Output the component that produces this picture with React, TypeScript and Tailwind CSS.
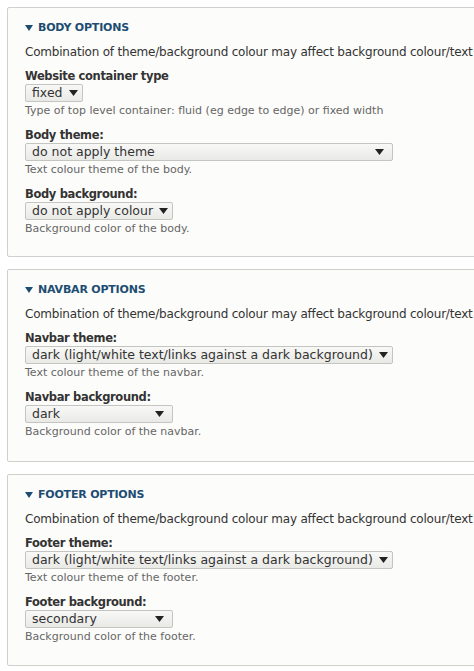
const FONT = "font-['DejaVu_Sans',_'Liberation_Sans',_sans-serif]";

type Item = {
  label: string;
  value: string;
  width: string;
  help: string;
};

type Group = {
  title: string;
  intro: string;
  items: Item[];
  extra: string;
};

const groups: Group[] = [
  {
    title: "Body options",
    intro: "Combination of theme/background colour may affect background colour/text",
    extra: "pb-[19px]",
    items: [
      {
        label: "Website container type",
        value: "fixed",
        width: "w-[58px]",
        help: "Type of top level container: fluid (eg edge to edge) or fixed width",
      },
      {
        label: "Body theme:",
        value: "do not apply theme",
        width: "w-[368px]",
        help: "Text colour theme of the body.",
      },
      {
        label: "Body background:",
        value: "do not apply colour",
        width: "w-[148px]",
        help: "Background color of the body.",
      },
    ],
  },
  {
    title: "Navbar options",
    intro: "Combination of theme/background colour may affect background colour/text",
    extra: "pb-[21px]",
    items: [
      {
        label: "Navbar theme:",
        value: "dark (light/white text/links against a dark background)",
        width: "w-[368px]",
        help: "Text colour theme of the navbar.",
      },
      {
        label: "Navbar background:",
        value: "dark",
        width: "w-[148px]",
        help: "Background color of the navbar.",
      },
    ],
  },
  {
    title: "Footer options",
    intro: "Combination of theme/background colour may affect background colour/text",
    extra: "pb-[20px]",
    items: [
      {
        label: "Footer theme:",
        value: "dark (light/white text/links against a dark background)",
        width: "w-[368px]",
        help: "Text colour theme of the footer.",
      },
      {
        label: "Footer background:",
        value: "secondary",
        width: "w-[148px]",
        help: "Background color of the footer.",
      },
    ],
  },
];

function Select({ value, width }: { value: string; width: string }) {
  return (
    <div
      className={`${width} h-[18px] flex items-center justify-between pl-[6px] pr-[8px] rounded-[2px] border border-[#c4c4c0] bg-gradient-to-b from-[#f8f8f6] to-[#e9e9e6] text-[12.5px] leading-none text-[#333] whitespace-nowrap`}
    >
      <span>{value}</span>
      <svg width="9" height="6" viewBox="0 0 9 6" className="shrink-0 ml-[6px]">
        <path d="M0 0 H9 L4.5 6 Z" fill="#222" />
      </svg>
    </div>
  );
}

function FormItem({ item }: { item: Item }) {
  return (
    <div className="mt-[8px]">
      <div className="h-[16px] leading-[16px] text-[11.5px] tracking-[-0.35px] font-bold text-[#333]">
        {item.label}
      </div>
      <Select value={item.value} width={item.width} />
      <div className="h-[17px] leading-[17px] text-[11px] text-[#666]">
        {item.help}
      </div>
    </div>
  );
}

function Fieldset({ group }: { group: Group }) {
  return (
    <section
      className={`w-[500px] border border-[#cfcfcc] rounded-[2px] bg-[#fcfcfa] pl-[17px] pt-[12px] ${group.extra}`}
    >
      <div className="h-[16px] flex items-center gap-[5px] text-[#1d4d73] font-bold text-[11px] uppercase tracking-[-0.2px]">
        <svg width="8" height="6" viewBox="0 0 8 6">
          <path d="M0 0 H8 L4 6 Z" fill="#1d4d73" />
        </svg>
        <span>{group.title}</span>
      </div>
      <p className="mt-[8px] h-[16px] leading-[16px] text-[12px] tracking-[-0.2px] text-[#333] whitespace-nowrap">
        {group.intro}
      </p>
      {group.items.map((item) => (
        <FormItem key={item.label} item={item} />
      ))}
    </section>
  );
}

export default function App() {
  return (
    <div className={`w-[474px] h-[671px] overflow-hidden bg-white ${FONT}`}>
      <div className="pl-[7px] pt-[7px] flex flex-col gap-[12px]">
        {groups.map((g) => (
          <Fieldset key={g.title} group={g} />
        ))}
      </div>
    </div>
  );
}
